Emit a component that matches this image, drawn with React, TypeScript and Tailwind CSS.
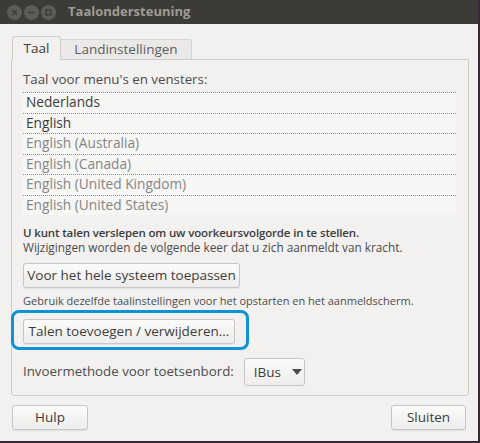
const langs = [
  { name: "Nederlands", active: true },
  { name: "English", active: true },
  { name: "English (Australia)", active: false },
  { name: "English (Canada)", active: false },
  { name: "English (United Kingdom)", active: false },
  { name: "English (United States)", active: false },
];

const WinButton = ({ kind }: { kind: "close" | "min" | "max" }) => (
  <div className="w-[15px] h-[15px] rounded-full bg-[#5d5c58] flex items-center justify-center">
    <svg width="9" height="9" viewBox="0 0 9 9" fill="none" stroke="#3c3b37" strokeWidth="1.5">
      {kind === "close" && <path d="M2 2l5 5M7 2L2 7" />}
      {kind === "min" && <path d="M1.5 4.5h6" />}
      {kind === "max" && <rect x="2" y="2" width="5" height="5" />}
    </svg>
  </div>
);

const GtkButton = ({ children, className = "" }: { children: React.ReactNode; className?: string }) => (
  <div
    className={`h-[25px] flex items-center justify-center whitespace-nowrap rounded-[3px] border border-[#c8c6c3] bg-gradient-to-b from-[#fbfbfa] to-[#eeedeb] shadow-[0_1px_0_rgba(0,0,0,0.06)] text-[13.5px] text-[#3c3c3c] ${className}`}
  >
    {children}
  </div>
);

export default function App() {
  return (
    <div
      className="w-[480px] h-[443px] bg-[#3d2637] pr-[2px] pb-[2px] whitespace-nowrap"
      style={{ fontFamily: '"Open Sans", "Noto Sans", sans-serif' }}
    >
      <div className="h-full flex flex-col bg-[#f2f1f0]">
        {/* title bar */}
        <div className="h-[24px] bg-[#3c3b37] flex items-center pl-[7px]">
          <div className="flex gap-[2px]">
            <WinButton kind="close" />
            <WinButton kind="min" />
            <WinButton kind="max" />
          </div>
          <span className="ml-[12px] text-[13px] font-bold text-[#9e9c96]">Taalondersteuning</span>
        </div>

        <div className="flex-1 flex flex-col px-[11px]">
          {/* tabs */}
          <div className="mt-[12px] h-[23px] flex items-end pl-[1px]">
            <div className="h-[24px] w-[49px] border border-b-0 border-[#cfcdca] rounded-t-[3px] bg-[#f2f1f0] text-[13.5px] text-[#3c3c3c] flex items-center justify-center relative z-10 -mb-[1px]">
              Taal
            </div>
            <div className="h-[20px] w-[131px] border border-l-0 border-b-0 border-[#d6d4d1] rounded-tr-[3px] bg-[#eae9e7] text-[13.5px] text-[#5e5e5e] flex items-center justify-center">
              Landinstellingen
            </div>
          </div>

          {/* notebook */}
          <div className="h-[337px] w-[458px] border border-[#cfcdca] rounded-b-[3px] pl-[11px] pr-[11px] relative">
            <div className="mt-[10px] h-[20px] flex items-center text-[13.3px] text-[#4c4c4c]">
              Taal voor menu's en vensters:
            </div>
            <div className="mt-[2px] w-[433px] bg-[#f6f6f5]">
              {langs.map((l) => (
                <div
                  key={l.name}
                  className={`h-[20.5px] border-t border-dotted border-[#8f8f8f] flex items-center pl-[3px] text-[13.7px] ${l.active ? "text-[#3c3c3c]" : "text-[#858585]"}`}
                >
                  {l.name}
                </div>
              ))}
            </div>
            <div className="mt-[11px] text-[11.5px] leading-[14px] font-semibold tracking-[-0.15px] text-[#3c3c3c]">
              U kunt talen verslepen om uw voorkeursvolgorde in te stellen.
            </div>
            <div className="text-[11.8px] leading-[14px] text-[#4c4c4c]">
              Wijzigingen worden de volgende keer dat u zich aanmeldt van kracht.
            </div>
            <GtkButton className="mt-[9px] w-[217px]">Voor het hele systeem toepassen</GtkButton>
            <div className="mt-[6px] text-[11px] leading-[14px] text-[#4c4c4c]">
              Gebruik dezelfde taalinstellingen voor het opstarten en het aanmeldscherm.
            </div>
            <div className="relative mt-[11px] w-[212px]">
              <GtkButton className="w-[212px]">Talen toevoegen / verwijderen...</GtkButton>
              <div className="absolute -left-[12px] -top-[9px] w-[238px] h-[40px] border-[3px] border-[#0e92d6] rounded-[8px] pointer-events-none" />
            </div>
            <div className="mt-[14px] flex items-center">
              <span className="text-[13.3px] text-[#4c4c4c]">Invoermethode voor toetsenbord:</span>
              <div className="ml-[10px] h-[28px] w-[61px] rounded-[3px] border border-[#c8c6c3] bg-gradient-to-b from-[#fbfbfa] to-[#eeedeb] flex items-center pl-[9px] text-[13.5px] text-[#3c3c3c]">
                IBus
                <svg width="10" height="6" viewBox="0 0 10 6" className="ml-[11px]">
                  <path d="M0 0h10L5 6z" fill="#4c4c4c" />
                </svg>
              </div>
            </div>
          </div>

          {/* dialog buttons */}
          <div className="mt-[9px] flex justify-between pl-[1px] pr-[1px]">
            <GtkButton className="w-[76px]">Hulp</GtkButton>
            <GtkButton className="w-[75px]">Sluiten</GtkButton>
          </div>
        </div>
      </div>
    </div>
  );
}
